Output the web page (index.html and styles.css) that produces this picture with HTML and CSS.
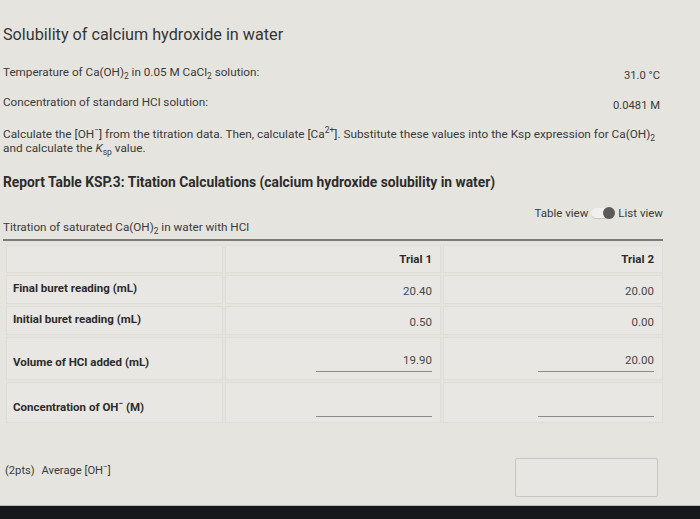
FILE: index.html
```html
<!DOCTYPE html>
<html lang="en">
<head>
<meta charset="utf-8">
<title>Solubility of calcium hydroxide in water</title>
<link rel="stylesheet" href="styles.css">
</head>
<body>
<div class="page">
  <h1 class="title">Solubility of calcium hydroxide in water</h1>

  <div class="given">
    <span class="given-label">Temperature of Ca(OH)<sub>2</sub> in 0.05 M CaCl<sub>2</sub> solution:</span>
    <span class="given-value">31.0 °C</span>
  </div>
  <div class="given">
    <span class="given-label">Concentration of standard HCl solution:</span>
    <span class="given-value">0.0481 M</span>
  </div>

  <p class="instructions">Calculate the [OH<sup>−</sup>] from the titration data. Then, calculate [Ca<sup>2+</sup>]. Substitute these values into the Ksp expression for Ca(OH)<sub>2</sub> and calculate the <i>K</i><sub>sp</sub> value.</p>

  <h2 class="report-title">Report Table KSP.3: Titation Calculations (calcium hydroxide solubility in water)</h2>

  <div class="view-toggle">
    <span>Table view</span>
    <span class="switch"><span class="knob"></span></span>
    <span>List view</span>
  </div>

  <div class="caption">Titration of saturated Ca(OH)<sub>2</sub> in water with HCl</div>

  <table class="data">
    <colgroup>
      <col class="c-label">
      <col class="c-t1">
      <col class="c-t2">
    </colgroup>
    <tr class="head">
      <td class="label"></td>
      <td class="val"><b>Trial 1</b></td>
      <td class="val"><b>Trial 2</b></td>
    </tr>
    <tr class="r1">
      <td class="label">Final buret reading (mL)</td>
      <td class="val">20.40</td>
      <td class="val">20.00</td>
    </tr>
    <tr class="r2">
      <td class="label">Initial buret reading (mL)</td>
      <td class="val">0.50</td>
      <td class="val">0.00</td>
    </tr>
    <tr class="r3">
      <td class="label">Volume of HCl added (mL)</td>
      <td class="val"><span class="field">19.90</span></td>
      <td class="val"><span class="field">20.00</span></td>
    </tr>
    <tr class="r4">
      <td class="label">Concentration of OH<sup>−</sup> (M)</td>
      <td class="val"><span class="field"></span></td>
      <td class="val"><span class="field"></span></td>
    </tr>
  </table>

  <div class="average">
    <span class="avg-label"><span class="pts">(2pts)</span> Average [OH<sup>−</sup>]</span>
    <span class="avg-box"></span>
  </div>
</div>
<div class="bezel"></div>
</body>
</html>
```

FILE: styles.css
```css
html, body {
  margin: 0;
  padding: 0;
  background: #e6e4df;
}
body {
  width: 700px;
  height: 519px;
  overflow: hidden;
  position: relative;
  font-family: Roboto, "Liberation Sans", Arial, sans-serif;
  color: #3a3a3a;
}
.page {
  padding: 0 37px 0 3px;
}
sub, sup {
  font-size: 0.72em;
  line-height: 0;
}
.title {
  margin: 0;
  padding-top: 24px;
  font-size: 16.2px;
  font-weight: 400;
  line-height: 22px;
  color: #353535;
}
.given {
  display: flex;
  justify-content: space-between;
  align-items: baseline;
  font-size: 11.7px;
  line-height: 14px;
  height: 30px;
}
.title + .given { margin-top: 19px; }
.given-value {
  position: relative;
  top: 3px;
  padding-right: 3px;
  font-size: 11.2px;
}
.instructions {
  margin: 2px 0 0;
  max-width: 656px;
  font-size: 11.8px;
  line-height: 14px;
  color: #3a3a3a;
}
.report-title {
  margin: 18px 0 0;
  font-size: 13.8px;
  font-weight: 700;
  line-height: 18px;
  color: #2c2c2c;
}
.view-toggle {
  display: flex;
  justify-content: flex-end;
  align-items: center;
  gap: 3px;
  margin-top: 15px;
  font-size: 11.5px;
  line-height: 14px;
}
.switch {
  position: relative;
  width: 24px;
  height: 11px;
  border-radius: 6px;
  background: #f1f0ed;
  border-bottom: 1px solid #c9c7c2;
  box-sizing: border-box;
}
.knob {
  position: absolute;
  right: 0;
  top: -1px;
  width: 12px;
  height: 12px;
  border-radius: 50%;
  background: #5a5a5a;
}
.caption {
  margin-top: 0;
  font-size: 11.7px;
  line-height: 14px;
  padding-bottom: 5px;
  border-bottom: 2px solid #7d7b78;
}
.data {
  width: 661px;
  margin: 2px 0 0 1px;
  border-collapse: separate;
  border-spacing: 2px;
  table-layout: fixed;
}
.c-label { width: 217px; }
.c-t1 { width: 216px; }
.data td {
  box-sizing: border-box;
  background: #e9e7e3;
  border: 1px solid #dfddd8;
  padding: 0 8px;
  font-size: 11.5px;
  line-height: 14px;
  vertical-align: middle;
}
.data td.label {
  font-weight: 700;
  color: #2c2c2c;
  padding-left: 6px;
}
.data td.val {
  text-align: right;
  color: #474747;
}
.data td.val b { color: #2c2c2c; }
.head td { height: 28px; }
.r1 td { height: 29px; }
.r2 td { height: 29px; }
.r3 td { height: 43px; }
.r4 td { height: 41px; }
.r1 td.val, .r2 td.val { padding-top: 3px; }
.r1 td.label, .r2 td.label { padding-bottom: 4px; }
.r3 td, .r4 td { vertical-align: top; }
.r3 td.label, .r4 td.label { padding-top: 17px; }
.r3 td.val, .r4 td.val { padding-top: 15px; }
.field {
  display: inline-block;
  width: 116px;
  height: 14px;
  line-height: 14px;
  border-bottom: 1px solid #8e8c88;
  padding-bottom: 4px;
}
.average {
  display: flex;
  justify-content: space-between;
  align-items: flex-start;
  margin-top: 33px;
  padding-left: 2px;
  font-size: 11.2px;
  line-height: 14px;
}
.avg-label { padding-top: 6px; }
.pts { margin-right: 4px; }
.avg-box {
  width: 143px;
  height: 39px;
  box-sizing: border-box;
  border: 1px solid #c8c6c1;
  border-radius: 2px;
  background: #e8e6e2;
  margin-right: 5px;
}
.bezel {
  position: absolute;
  left: 0;
  right: 0;
  bottom: 0;
  height: 13px;
  background: #15171c;
  border-top: 1px solid #b9b8b4;
}
```
